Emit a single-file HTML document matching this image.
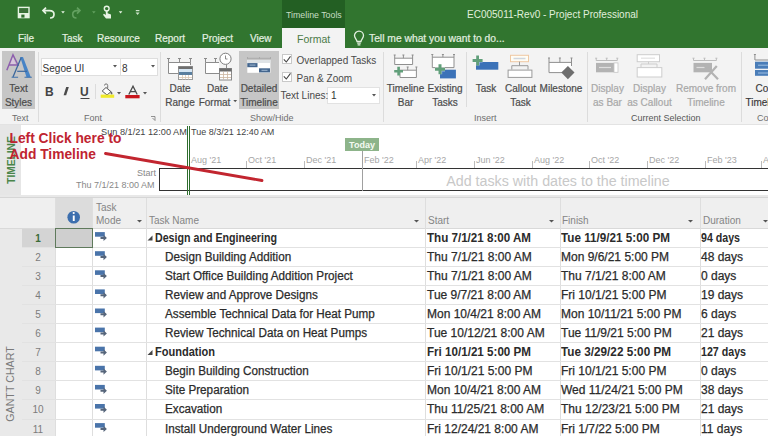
<!DOCTYPE html>
<html><head><meta charset="utf-8">
<style>
*{margin:0;padding:0;box-sizing:border-box}
html,body{width:768px;height:436px;overflow:hidden;background:#fff;font-family:"Liberation Sans",sans-serif}
.a{position:absolute;white-space:nowrap}
#title{position:absolute;left:0;top:0;width:768px;height:48px;background:#31752f}
#tools{position:absolute;left:282px;top:0;width:63px;height:28px;background:#235f23}
#fmt{position:absolute;left:282px;top:28px;width:63px;height:21px;background:#f3f3f3}
.tw{color:#e3f0e0;font-size:10px;line-height:14px;-webkit-text-stroke:0.2px #e3f0e0}
#ribbon{position:absolute;left:0;top:48px;width:768px;height:77px;background:#f3f3f3}
.rt{color:#4c4c4c;font-size:11px;text-align:center;-webkit-text-stroke:0.2px #4c4c4c}
.gl{color:#6e6e6e;font-size:10px}
.sep{position:absolute;width:1px;background:#dcdcdc}
.dis{color:#a8a8a8;-webkit-text-stroke:0.2px #a8a8a8 !important}
#tl{position:absolute;left:0;top:125px;width:768px;height:72px;background:#fff}
#grid{position:absolute;left:0;top:198px;width:768px;height:238px;background:#fff}
.row{position:absolute;left:22px;width:746px;height:19px;border-bottom:1px solid #e4e4e4}
.cell{position:absolute;top:0;height:19px;font-size:12px;color:#222;line-height:18px;white-space:nowrap;overflow:hidden}
.b{font-weight:bold}
</style></head><body>
<div id="title"></div>
<div id="tools"></div>
<div id="fmt"></div>

<!-- quick access -->
<svg class="a" style="left:0;top:0" width="150" height="28" viewBox="0 0 150 28">
  <rect x="18.4" y="7.4" width="10.6" height="10.2" fill="none" stroke="#e6f3e3" stroke-width="1.4"/>
  <rect x="18.4" y="13" width="10.6" height="4.6" fill="#e6f3e3"/>
  <rect x="21.3" y="14.6" width="3.2" height="3" fill="#2e6a2c"/>
  <rect x="20" y="9" width="7.4" height="3.6" fill="#3c6f3a"/>
  <path d="M46 7.6 L43 10.6 L46 13.6 M43.3 10.6 H49.5 C52.5 10.6 54 12.3 54 14.3 C54 16.4 52.5 18 50 18" fill="none" stroke="#e6f3e3" stroke-width="1.7"/>
  <path d="M61.2 11.3 h3.6 l-1.8 2.2z" fill="#e6f3e3"/>
  <path d="M77 7.6 L80 10.6 L77 13.6 M79.7 10.6 H77 C74 10.6 72.7 12.3 72.7 14.3 C72.7 16.4 74 18 76.5 18" fill="none" stroke="#62a05f" stroke-width="1.6"/>
  <path d="M92 11.3 h3.6 l-1.8 2.2z" fill="#62a05f"/>
  <circle cx="106.7" cy="8.6" r="2.4" fill="none" stroke="#e6f3e3" stroke-width="1.4"/>
  <path d="M105.8 10.5 V15 L104 13.8 L103 14.8 L106 18.5 H111 V14.5 L107.6 13.3 V10.5 Z" fill="#e6f3e3"/>
  <path d="M118.8 11.3 h3.6 l-1.8 2.2z" fill="#e6f3e3"/>
  <rect x="135.8" y="10" width="3.6" height="1.2" fill="#cfe5cc"/>
  <path d="M135.6 12.6 h4 l-2 2.3z" fill="#cfe5cc"/>
</svg>
<div class="a" style="left:286px;top:8px;font-size:8.8px;line-height:14px;color:#c6dec4">Timeline Tools</div>
<div class="a" style="left:467px;top:7.5px;font-size:10px;line-height:14px;color:#e0f0dc">EC005011-Rev0 - Project Professional</div>

<!-- tabs -->
<div class="a tw" style="left:18px;top:31.5px">File</div>
<div class="a tw" style="left:62px;top:31.5px">Task</div>
<div class="a tw" style="left:97px;top:31.5px">Resource</div>
<div class="a tw" style="left:155px;top:31.5px">Report</div>
<div class="a tw" style="left:202px;top:31.5px">Project</div>
<div class="a tw" style="left:250px;top:31.5px">View</div>
<div class="a" style="left:297px;top:31.5px;font-size:10.5px;line-height:14px;color:#4b7a48">Format</div>
<svg class="a" style="left:352px;top:30px" width="14" height="17" viewBox="0 0 14 17">
  <path d="M5 11.5 C4.6 9.3 2.5 8 2.5 5.6 A4.5 4.5 0 0 1 11.5 5.6 C11.5 8 9.4 9.3 9 11.5 Z" fill="none" stroke="#e3f0e0" stroke-width="1.3"/>
  <path d="M5.2 13.2 h3.6 M5.6 14.8 h2.8" stroke="#e3f0e0" stroke-width="1.2"/>
</svg>
<div class="a tw" style="left:369px;top:31.5px;font-size:10.3px">Tell me what you want to do...</div>


<div id="ribbon"></div>
<div class="a" style="left:0;top:123.8px;width:768px;height:1px;background:#e3e3e3"></div>
<!-- ribbon highlights -->
<div class="a" style="left:2px;top:51px;width:33px;height:58px;background:#c6c6c6"></div>
<div class="a" style="left:239px;top:51px;width:40px;height:58px;background:#c6c6c6"></div>
<!-- separators -->
<div class="sep" style="left:38px;top:52px;height:70px"></div>
<div class="sep" style="left:160px;top:52px;height:70px"></div>
<div class="sep" style="left:383px;top:52px;height:70px"></div>
<div class="sep" style="left:466px;top:52px;height:55px"></div>
<div class="sep" style="left:587px;top:52px;height:70px"></div>
<div class="sep" style="left:741px;top:52px;height:70px"></div>
<div class="sep" style="left:95px;top:84px;height:15px"></div>
<!-- combos -->
<div class="a" style="left:41px;top:58px;width:80px;height:18px;background:#fff;border:1px solid #dedede"></div>
<div class="a" style="left:120px;top:58px;width:37.5px;height:18px;background:#fff;border:1px solid #dedede"></div>
<div class="a" style="left:42.6px;top:61.5px;font-size:10px;color:#333;line-height:14px">Segoe UI</div>
<div class="a" style="left:122px;top:61.5px;font-size:10px;color:#333;line-height:14px">8</div>
<div class="a" style="left:327px;top:87px;width:53px;height:17px;background:#fff;border:1px solid #e2e2e2"></div>
<div class="a" style="left:331px;top:89.3px;font-size:10px;color:#333;line-height:14px">1</div>
<!-- labels -->
<div class="a rt" style="left:-2px;top:81.5px;width:41px;line-height:14px;font-size:10px">Text<br>Styles</div>
<div class="a rt" style="left:160px;top:81.5px;width:40px;line-height:14px;font-size:10px">Date<br>Range</div>
<div class="a rt" style="left:197px;top:81.5px;width:41px;line-height:14px;font-size:10px">Date<br><span style="margin-left:-6px">Format</span></div>
<div class="a rt" style="left:239px;top:81.5px;width:40px;line-height:14px;font-size:10px">Detailed<br>Timeline</div>
<div class="a rt" style="left:385px;top:81.5px;width:41px;line-height:14px;font-size:10px">Timeline<br>Bar</div>
<div class="a rt" style="left:425px;top:81.5px;width:40px;line-height:14px;font-size:10px">Existing<br>Tasks</div>
<div class="a rt" style="left:466px;top:81.5px;width:40px;line-height:14px;font-size:10px">Task</div>
<div class="a rt" style="left:500px;top:81.5px;width:41px;line-height:14px;font-size:10px">Callout<br>Task</div>
<div class="a rt" style="left:537px;top:81.5px;width:48px;line-height:14px;font-size:10px">Milestone</div>
<div class="a rt dis" style="left:587px;top:81.5px;width:41px;line-height:14px;font-size:10px">Display<br>as Bar</div>
<div class="a rt dis" style="left:625px;top:81.5px;width:49px;line-height:14px;font-size:10px">Display<br>as Callout</div>
<div class="a rt dis" style="left:672px;top:81.5px;width:68px;line-height:14px;font-size:10px">Remove from<br>Timeline</div>
<div class="a rt" style="left:745.5px;top:81.5px;width:60px;line-height:14px;font-size:10px;text-align:left;color:#383838;-webkit-text-stroke:0.15px #383838"><span style="margin-left:10px">Co</span><br>Timeline</div>
<div class="a" style="left:296.5px;top:53.7px;font-size:10px;color:#4a4a4a;line-height:14px">Overlapped Tasks</div>
<div class="a" style="left:296.5px;top:71.5px;font-size:10px;color:#4a4a4a;line-height:14px">Pan &amp; Zoom</div>
<div class="a" style="left:280.5px;top:89px;font-size:10px;color:#4a4a4a;line-height:14px">Text Lines:</div>
<div class="a gl" style="left:12px;top:111.8px;line-height:12px;font-size:9px">Text</div>
<div class="a gl" style="left:84px;top:111.8px;line-height:12px;font-size:9px">Font</div>
<div class="a gl" style="left:250px;top:111.8px;line-height:12px;font-size:9px">Show/Hide</div>
<div class="a gl" style="left:474px;top:111.8px;line-height:12px;font-size:9px">Insert</div>
<div class="a gl" style="left:631px;top:111.8px;line-height:12px;font-size:9px;color:#555">Current Selection</div>
<div class="a gl" style="left:757px;top:111.8px;line-height:12px;font-size:9px">Co</div>
<!-- checkboxes -->
<div class="a" style="left:282px;top:54px;width:10px;height:10px;background:#fff;border:1px solid #c8c8c8"></div>
<div class="a" style="left:282px;top:71.5px;width:10px;height:10px;background:#fff;border:1px solid #c8c8c8"></div>
<svg class="a" style="left:0;top:0" width="768" height="200" viewBox="0 0 768 200">
 <g fill="none" stroke="#444" stroke-width="1.1">
  <path d="M283.8 59.3 l2.5 2.7 l4.2 -5.6"/>
  <path d="M283.8 76.3 l2.5 2.7 l4.2 -5.6"/>
 </g>
 <!-- text styles AA -->
 <path d="M6.8 70.3 L13 54.8 L18.5 66 M9.3 65 H17" fill="none" stroke="#8e5fae" stroke-width="1.5"/>
 <path d="M10.5 64 L13 57.5 L15.5 64z" fill="#e2c6ea" opacity="0.7"/>
 <path d="M20.2 57 L23 57 L30.8 77.2 L26.5 77.2 Z" fill="#4884c6"/>
 <path d="M21.2 57.5 L13 77" fill="none" stroke="#3c679c" stroke-width="1.3"/>
 <path d="M17.2 71.3 H27" fill="none" stroke="#3c679c" stroke-width="1.2"/>
 <path d="M11.6 77.2 h6.5 M24.5 77.2 h7.3" fill="none" stroke="#3f72ac" stroke-width="1.1"/>
 <!-- combo arrows -->
 <path d="M113 65 h4 l-2 2.5z M151 65 h4 l-2 2.5z M372 94 h4 l-2 2.5z" fill="#555"/>
 <!-- B I U -->
 <text x="45" y="96" font-family="Liberation Sans" font-size="12" font-weight="bold" fill="#444">B</text>
 <path d="M66.2 87 h2.6 l-2.6 8.2 h-2.6z" fill="#4a4a4a"/>
 <text x="80" y="96" font-family="Liberation Sans" font-size="12" font-weight="bold" fill="#444">U</text>
 <path d="M80.5 98.5 h9" stroke="#444" stroke-width="1"/>
 <!-- fill color -->
 <path d="M104.5 85.5 a1.6 1.6 0 0 1 3.2 0 v3" fill="none" stroke="#666" stroke-width="0.9"/>
 <path d="M106 87.5 l5 4.2 l-4 3.3 l-4.8 -4z" fill="#fff" stroke="#555" stroke-width="1"/>
 <path d="M111.2 91.2 q1.8 1.6 1.2 3 q-1 0.8 -1.8 -0.4z" fill="#666"/>
 <rect x="100.7" y="94.6" width="13.5" height="3.2" fill="#f0ea2c"/>
 <path d="M117 92 h4 l-2 2.5z" fill="#555"/>
 <path d="M128.8 94.5 L133 86.3 L137.2 94.5 M130.3 91.6 H135.7" fill="none" stroke="#4a4a4a" stroke-width="1.3"/>
 <rect x="125.3" y="95" width="14.3" height="3.3" fill="#c8161d"/>
 <path d="M143 92 h4 l-2 2.5z" fill="#555"/>
 <path d="M151 116.5 h4 v4 M152.5 118 l2.5 2.5" fill="none" stroke="#777" stroke-width="0.8"/>
 <path d="M233.3 100 h3.8 l-1.9 2.3z" fill="#555"/>
</svg>



<svg class="a" style="left:0;top:0" width="768" height="200" viewBox="0 0 768 200">
 <!-- Date Range -->
 <path d="M168.5 73.5 V62.5 H190.5 V65 M168.5 73.5 H178 M168.5 58 v4.5 M179.5 58 v4.5 M190.5 58 v4.5 M167 58.5 h3 M178 58.5 h3 M189 58.5 h3" fill="none" stroke="#8c8c8c" stroke-width="1"/>
 <rect x="169" y="63" width="21" height="10" fill="#fff"/>
 <rect x="178.5" y="66.5" width="14" height="13" fill="#fff" stroke="#9a9a9a"/>
 <rect x="178.5" y="66.5" width="14" height="2.5" fill="#6e6e6e"/>
 <rect x="179" y="69" width="13" height="3" fill="#d6e6f3"/>
 <rect x="179" y="72" width="13" height="3" fill="#5a7f9f"/>
 <path d="M179 77.5 h13 M182.5 75 v4.5 M185.5 75 v4.5 M188.5 75 v4.5" stroke="#dcc9b5" stroke-width="0.8"/>
 <!-- Date Format -->
 <path d="M205.5 73.5 V62.5 H219 M205.5 73.5 H219 M205.5 58 v4.5 M215.5 58 v4.5 M204 58.5 h3 M214 58.5 h3" fill="none" stroke="#8c8c8c" stroke-width="1"/>
 <rect x="206" y="63" width="13" height="10" fill="#fff"/>
 <circle cx="225.5" cy="58.8" r="5.6" fill="#fff" stroke="#7d7d7d" stroke-width="1"/>
 <path d="M225.5 55.5 v3.5 h2" fill="none" stroke="#7d7d7d" stroke-width="0.9"/>
 <path d="M226.5 64.5 v4" stroke="#8c8c8c"/>
 <rect x="219.5" y="68.5" width="12" height="11.5" fill="#fff" stroke="#8a8a8a"/>
 <rect x="219.5" y="68.5" width="12" height="3" fill="#6b6b6b"/>
 <path d="M220 74.5 h11 M220 77.5 h11 M223.5 71.5 v8 M227.5 71.5 v8" stroke="#cdb6a0" stroke-width="0.8"/>
 <!-- Detailed Timeline -->
 <path d="M247 58.3 h24 M247.5 57 v2 M259.5 57 v2 M270.5 57 v2" stroke="#aaa" stroke-width="1"/>
 <rect x="247.3" y="60" width="23.1" height="12.8" fill="#fff"/>
 <rect x="247.3" y="60" width="23.1" height="3" fill="#dfe3e6"/>
 <rect x="247.3" y="63.1" width="10.2" height="4.1" fill="#44668e"/>
 <rect x="259" y="68.3" width="11" height="4.1" fill="#44668e"/>
 <path d="M249.5 65.1 h6 M261.5 70.3 h6" stroke="#b9cde2" stroke-width="0.8"/>
 <!-- Timeline Bar -->
 <rect x="394.7" y="58.2" width="17.9" height="6.3" fill="#fff"/>
 <path d="M394.7 55 V64.5 H412.6 V55 M394.7 58.2 H412.6 M403.4 55 v3.2 M393.7 55 h2 M402.4 55 h2 M411.6 55 h2" fill="none" stroke="#8f8f8f" stroke-width="1"/>
 <rect x="400" y="70.2" width="16.4" height="7.3" fill="#fff"/>
 <path d="M400 70.2 V77.5 H416.4 V67 M400 70.2 H416.4 M407.7 67 v3.2 M406.7 67 h2 M415.4 67 h2" fill="none" stroke="#8f8f8f" stroke-width="1"/>
 <path d="M398.6 66.8 v8.8 M394.2 71.2 h8.8" stroke="#619f7a" stroke-width="2.6"/>
 <!-- Existing Tasks -->
 <rect x="432.3" y="57.2" width="21.7" height="10.4" fill="#fff"/>
 <path d="M432.3 54.5 V67.6 H454 V54.5 M432.3 57.2 H454 M442.9 54.5 v2.7 M431.3 54.5 h2 M441.9 54.5 h2 M453 54.5 h2" fill="none" stroke="#8f8f8f" stroke-width="1"/>
 <rect x="440" y="69.7" width="15.9" height="8.7" fill="#3b72b8"/>
 <path d="M440 64.3 v10 M435 69.3 h10" stroke="#fff" stroke-width="4.4" opacity="0.5"/>
 <path d="M440 64.3 v10 M435 69.3 h10" stroke="#619f7a" stroke-width="3"/>
 <!-- Task -->
 <rect x="476" y="62" width="22.3" height="7.7" fill="#3b72b8"/>
 <path d="M477.6 55.5 v10 M472.6 60.5 h10" stroke="#fff" stroke-width="4.2" opacity="0.5"/>
 <path d="M477.6 55.5 v10 M472.6 60.5 h10" stroke="#619f7a" stroke-width="2.8"/>
 <!-- Callout Task -->
 <rect x="510.5" y="55.3" width="18" height="6.4" fill="#fffdf5" stroke="#efc9a3" stroke-width="1"/>
 <path d="M513.5 58.5 h12" stroke="#cfd6df" stroke-width="1.5"/>
 <path d="M519.5 61.7 v4 M511.8 69.5 V65.7 H528 V69.5" fill="none" stroke="#9a9a9a" stroke-width="1"/>
 <rect x="508.1" y="70.1" width="23.8" height="7.3" fill="#fff" stroke="#9a9a9a" stroke-width="1"/>
 <!-- Milestone -->
 <rect x="549" y="62.4" width="22.5" height="10.2" fill="#fff"/>
 <path d="M549 58 V72.6 H562 M571.5 58 V66 M549 62.4 H571.5 M559.9 58 v4.4 M548 58 h2 M558.9 58 h2 M570.5 58 h2" fill="none" stroke="#8f8f8f" stroke-width="1"/>
 <path d="M567.9 66 l6.6 6.6 l-6.6 6.6 l-6.6 -6.6z" fill="#6e6e6e"/>
 <!-- Display as Bar (disabled) -->
 <path d="M596.2 58.2 V60.5 H617.3 V58.2 M606.7 58.2 v2.3 M595.2 58.2 h2 M605.7 58.2 h2 M616.3 58.2 h2" fill="none" stroke="#bdbdbd" stroke-width="1"/>
 <rect x="596" y="62.9" width="18" height="9.4" fill="#b3b3b3"/>
 <rect x="614" y="62.9" width="4" height="9.4" fill="#fff" stroke="#c5c5c5" stroke-width="0.8"/>
 <path d="M599 67.5 h12" stroke="#dedede" stroke-width="1.2"/>
 <!-- Display as Callout -->
 <rect x="637.2" y="54.7" width="22.3" height="7" fill="#fff" stroke="#cdcdcd"/>
 <path d="M641 58.2 h14" stroke="#e3e3e3" stroke-width="1.3"/>
 <path d="M648.5 61.7 v2.3 M641 67.6 V64 H657 V67.6" fill="none" stroke="#cdcdcd"/>
 <rect x="637.2" y="67.6" width="24.6" height="9.4" fill="#fff" stroke="#cdcdcd"/>
 <!-- Remove from Timeline -->
 <path d="M693.5 58.2 V60.5 H716.4 V58.2 M704.5 58.2 v2.3 M692.5 58.2 h2 M703.5 58.2 h2 M715.4 58.2 h2" fill="none" stroke="#bdbdbd" stroke-width="1"/>
 <rect x="693.5" y="62.9" width="18.5" height="9.4" fill="#b3b3b3"/>
 <path d="M696.5 67.5 h8" stroke="#dedede" stroke-width="1.2"/>
 <path d="M704.5 65.2 L718 79.3 M716.8 66 L705 79.3" stroke="#b3b3b3" stroke-width="2.2"/>
 <!-- Copy Timeline partial -->
 <path d="M754.9 54.5 v5.5 M753.9 54.5 h2 M755 60 H768" fill="none" stroke="#8f8f8f"/>
 <rect x="755" y="61.7" width="13" height="7" fill="#4a7db8"/>
 <rect x="755" y="70" width="13" height="5.8" fill="#4a7db8"/>
 <path d="M758 65.2 h10 M758 73 h10" stroke="#9dbfe2" stroke-width="1"/>
</svg>


<div class="a" style="left:0;top:125px;width:768px;height:70px;background:#fff"></div>
<div class="a" style="left:0;top:125px;width:21px;height:70px;background:#e6e6e6"></div>
<div class="a" style="left:0;top:195px;width:768px;height:3px;background:#e8e8e8"></div>
<div class="a" style="left:-14.8px;top:152.5px;width:54px;height:14px;transform:rotate(-90deg);font-size:10.2px;line-height:14px;color:#4a854a;text-align:center;font-weight:bold">TIMELINE</div>
<div class="a" style="left:101px;top:125px;font-size:9.2px;line-height:14px;color:#444">Sun 8/1/21 12:00 AM</div>
<div class="a" style="left:191px;top:125px;font-size:9px;line-height:14px;color:#444">Tue 8/3/21 12:40 AM</div>
<div class="a" style="left:159px;top:168px;width:609px;height:23px;border-top:1.5px solid #333;border-bottom:1.5px solid #333;border-left:1.5px solid #333"></div>
<div class="a" style="left:137px;top:166px;font-size:9px;line-height:14px;color:#888">Start</div>
<div class="a" style="left:76px;top:178px;font-size:9px;line-height:14px;color:#888">Thu 7/1/21 8:00 AM</div>
<div class="a" style="left:446.3px;top:172px;font-size:14.25px;line-height:18px;color:#c8c8c8">Add tasks with dates to the timeline</div>
<div class="a" style="left:345px;top:138px;width:34px;height:12.5px;background:#8db48a;color:#f4faf2;font-size:9px;line-height:15px;font-weight:bold;text-align:center;overflow:hidden">Today</div>
<div class="a" style="left:362px;top:151px;width:1px;height:40px;background:#a0a0a0"></div>
<svg class="a" style="left:0;top:0" width="768" height="200" viewBox="0 0 768 200">
 <g stroke="#bbb" stroke-width="1">
  <path d="M246.5 161 v7 M304.5 161 v7 M416.5 161 v7 M474.5 161 v7 M532.5 161 v7 M589.5 161 v7 M647.5 161 v7 M705.5 161 v7 M761.5 161 v7"/>
 </g>
 <path d="M187.5 126 v69 M189.5 126 v69" stroke="#2f6e2e" stroke-width="1"/>
</svg>
<div class="a" style="left:191px;top:153px;font-size:9px;line-height:14px;color:#a6a6a6">Aug '21</div>
<div class="a" style="left:248px;top:153px;font-size:9px;line-height:14px;color:#a6a6a6">Oct '21</div>
<div class="a" style="left:306px;top:153px;font-size:9px;line-height:14px;color:#a6a6a6">Dec '21</div>
<div class="a" style="left:364px;top:153px;font-size:9px;line-height:14px;color:#a6a6a6">Feb '22</div>
<div class="a" style="left:418px;top:153px;font-size:9px;line-height:14px;color:#a6a6a6">Apr '22</div>
<div class="a" style="left:476px;top:153px;font-size:9px;line-height:14px;color:#a6a6a6">Jun '22</div>
<div class="a" style="left:534px;top:153px;font-size:9px;line-height:14px;color:#a6a6a6">Aug '22</div>
<div class="a" style="left:591px;top:153px;font-size:9px;line-height:14px;color:#a6a6a6">Oct '22</div>
<div class="a" style="left:649px;top:153px;font-size:9px;line-height:14px;color:#a6a6a6">Dec '22</div>
<div class="a" style="left:707px;top:153px;font-size:9px;line-height:14px;color:#a6a6a6">Feb '23</div>
<div class="a" style="left:763px;top:153px;font-size:9px;line-height:14px;color:#a6a6a6">Apr '23</div>
<div class="a" style="left:9.5px;top:130.9px;font-size:13.8px;line-height:16.3px;letter-spacing:0px;color:#bf2431;font-weight:bold">Left Click here to<br>Add Timeline</div>
<svg class="a" style="left:0;top:0" width="768" height="200" viewBox="0 0 768 200">
 <path d="M105.5 153.5 L262 180.5" stroke="#c2252f" stroke-width="2.8" stroke-linecap="round"/>
</svg>

<div class="a" style="left:0;top:198px;width:768px;height:238px;background:#fff"></div>
<div class="a" style="left:0;top:197px;width:768px;height:1px;background:#d6d6d6"></div>
<div class="a" style="left:0;top:198px;width:768px;height:30.5px;background:#efefef"></div>
<div class="a" style="left:0;top:228px;width:768px;height:1px;background:#d9d9d9"></div>
<div class="a" style="left:55px;top:198px;width:37px;height:30.5px;background:#dcdcdc"></div>
<div class="a" style="left:0;top:228.5px;width:55px;height:208px;background:#e9e9e9"></div>
<div class="a" style="left:22px;top:228.5px;width:33px;height:19px;background:#d4d4d4"></div>
<div class="a" style="left:55px;top:198px;width:1px;height:238px;background:#dedede"></div>
<div class="a" style="left:92px;top:198px;width:1px;height:238px;background:#dedede"></div>
<div class="a" style="left:145.5px;top:198px;width:1px;height:238px;background:#dedede"></div>
<div class="a" style="left:424.5px;top:198px;width:1px;height:238px;background:#dedede"></div>
<div class="a" style="left:559.5px;top:198px;width:1px;height:238px;background:#dedede"></div>
<div class="a" style="left:699.5px;top:198px;width:1px;height:238px;background:#dedede"></div>
<div class="a" style="left:22px;top:246.6px;width:746px;height:1px;background:#e2e2e2"></div>
<div class="a" style="left:22px;top:265.7px;width:746px;height:1px;background:#e2e2e2"></div>
<div class="a" style="left:22px;top:284.8px;width:746px;height:1px;background:#e2e2e2"></div>
<div class="a" style="left:22px;top:303.9px;width:746px;height:1px;background:#e2e2e2"></div>
<div class="a" style="left:22px;top:323.0px;width:746px;height:1px;background:#e2e2e2"></div>
<div class="a" style="left:22px;top:342.1px;width:746px;height:1px;background:#e2e2e2"></div>
<div class="a" style="left:22px;top:361.2px;width:746px;height:1px;background:#e2e2e2"></div>
<div class="a" style="left:22px;top:380.3px;width:746px;height:1px;background:#e2e2e2"></div>
<div class="a" style="left:22px;top:399.4px;width:746px;height:1px;background:#e2e2e2"></div>
<div class="a" style="left:22px;top:418.5px;width:746px;height:1px;background:#e2e2e2"></div>
<div class="a" style="left:22px;top:437.6px;width:746px;height:1px;background:#e2e2e2"></div>
<div class="a" style="left:55px;top:228px;width:38px;height:20px;background:#cfcfcf;border:1.5px solid #5f7a5c"></div>
<div class="a" style="left:96px;top:200.5px;font-size:10px;line-height:13.6px;color:#858585">Task<br>Mode</div>
<div class="a" style="left:149px;top:214px;font-size:10px;line-height:14px;color:#858585">Task Name</div>
<div class="a" style="left:428px;top:214px;font-size:10px;line-height:14px;color:#858585">Start</div>
<div class="a" style="left:562px;top:214px;font-size:10px;line-height:14px;color:#858585">Finish</div>
<div class="a" style="left:703px;top:214px;font-size:10px;line-height:14px;color:#858585">Duration</div>
<div class="a" style="left:22px;top:228.5px;width:33px;text-align:center;font-size:10px;line-height:19px;color:#3a6b38;font-weight:bold;padding-right:1px">1</div>
<div class="a" style="left:155px;top:228.5px;font-size:12px;line-height:19px;color:#2b2b2b;font-weight:bold;transform:scaleX(0.888);transform-origin:0 0;">Design and Engineering</div>
<div class="a" style="left:427px;top:228.5px;font-size:12px;line-height:19px;color:#2b2b2b;font-weight:bold;transform:scaleX(0.967);transform-origin:0 0;">Thu 7/1/21 8:00 AM</div>
<div class="a" style="left:561px;top:228.5px;font-size:12px;line-height:19px;color:#2b2b2b;font-weight:bold;transform:scaleX(0.975);transform-origin:0 0;">Tue 11/9/21 5:00 PM</div>
<div class="a" style="left:701px;top:228.5px;font-size:12px;line-height:19px;color:#2b2b2b;font-weight:bold;transform:scaleX(0.886);transform-origin:0 0;">94 days</div>
<div class="a" style="left:22px;top:247.6px;width:33px;text-align:center;font-size:10px;line-height:19px;color:#7c7c7c;padding-right:1px">2</div>
<div class="a" style="left:164.5px;top:247.6px;font-size:12px;line-height:19px;color:#2b2b2b;-webkit-text-stroke:0.25px #2b2b2b;transform:scaleX(0.975);transform-origin:0 0;">Design Building Addition</div>
<div class="a" style="left:427px;top:247.6px;font-size:12px;line-height:19px;color:#2b2b2b;-webkit-text-stroke:0.25px #2b2b2b;">Thu 7/1/21 8:00 AM</div>
<div class="a" style="left:561px;top:247.6px;font-size:12px;line-height:19px;color:#2b2b2b;-webkit-text-stroke:0.25px #2b2b2b;">Mon 9/6/21 5:00 PM</div>
<div class="a" style="left:701px;top:247.6px;font-size:12px;line-height:19px;color:#2b2b2b;-webkit-text-stroke:0.25px #2b2b2b;">48 days</div>
<div class="a" style="left:22px;top:266.7px;width:33px;text-align:center;font-size:10px;line-height:19px;color:#7c7c7c;padding-right:1px">3</div>
<div class="a" style="left:164.5px;top:266.7px;font-size:12px;line-height:19px;color:#2b2b2b;-webkit-text-stroke:0.25px #2b2b2b;transform:scaleX(0.975);transform-origin:0 0;">Start Office Building Addition Project</div>
<div class="a" style="left:427px;top:266.7px;font-size:12px;line-height:19px;color:#2b2b2b;-webkit-text-stroke:0.25px #2b2b2b;">Thu 7/1/21 8:00 AM</div>
<div class="a" style="left:561px;top:266.7px;font-size:12px;line-height:19px;color:#2b2b2b;-webkit-text-stroke:0.25px #2b2b2b;">Thu 7/1/21 8:00 AM</div>
<div class="a" style="left:701px;top:266.7px;font-size:12px;line-height:19px;color:#2b2b2b;-webkit-text-stroke:0.25px #2b2b2b;">0 days</div>
<div class="a" style="left:22px;top:285.8px;width:33px;text-align:center;font-size:10px;line-height:19px;color:#7c7c7c;padding-right:1px">4</div>
<div class="a" style="left:164.5px;top:285.8px;font-size:12px;line-height:19px;color:#2b2b2b;-webkit-text-stroke:0.25px #2b2b2b;transform:scaleX(0.975);transform-origin:0 0;">Review and Approve Designs</div>
<div class="a" style="left:427px;top:285.8px;font-size:12px;line-height:19px;color:#2b2b2b;-webkit-text-stroke:0.25px #2b2b2b;">Tue 9/7/21 8:00 AM</div>
<div class="a" style="left:561px;top:285.8px;font-size:12px;line-height:19px;color:#2b2b2b;-webkit-text-stroke:0.25px #2b2b2b;">Fri 10/1/21 5:00 PM</div>
<div class="a" style="left:701px;top:285.8px;font-size:12px;line-height:19px;color:#2b2b2b;-webkit-text-stroke:0.25px #2b2b2b;">19 days</div>
<div class="a" style="left:22px;top:304.9px;width:33px;text-align:center;font-size:10px;line-height:19px;color:#7c7c7c;padding-right:1px">5</div>
<div class="a" style="left:164.5px;top:304.9px;font-size:12px;line-height:19px;color:#2b2b2b;-webkit-text-stroke:0.25px #2b2b2b;transform:scaleX(0.975);transform-origin:0 0;">Assemble Technical Data for Heat Pump</div>
<div class="a" style="left:427px;top:304.9px;font-size:12px;line-height:19px;color:#2b2b2b;-webkit-text-stroke:0.25px #2b2b2b;">Mon 10/4/21 8:00 AM</div>
<div class="a" style="left:561px;top:304.9px;font-size:12px;line-height:19px;color:#2b2b2b;-webkit-text-stroke:0.25px #2b2b2b;">Mon 10/11/21 5:00 PM</div>
<div class="a" style="left:701px;top:304.9px;font-size:12px;line-height:19px;color:#2b2b2b;-webkit-text-stroke:0.25px #2b2b2b;">6 days</div>
<div class="a" style="left:22px;top:324.0px;width:33px;text-align:center;font-size:10px;line-height:19px;color:#7c7c7c;padding-right:1px">6</div>
<div class="a" style="left:164.5px;top:324.0px;font-size:12px;line-height:19px;color:#2b2b2b;-webkit-text-stroke:0.25px #2b2b2b;transform:scaleX(0.975);transform-origin:0 0;">Review Technical Data on Heat Pumps</div>
<div class="a" style="left:427px;top:324.0px;font-size:12px;line-height:19px;color:#2b2b2b;-webkit-text-stroke:0.25px #2b2b2b;">Tue 10/12/21 8:00 AM</div>
<div class="a" style="left:561px;top:324.0px;font-size:12px;line-height:19px;color:#2b2b2b;-webkit-text-stroke:0.25px #2b2b2b;">Tue 11/9/21 5:00 PM</div>
<div class="a" style="left:701px;top:324.0px;font-size:12px;line-height:19px;color:#2b2b2b;-webkit-text-stroke:0.25px #2b2b2b;">21 days</div>
<div class="a" style="left:22px;top:343.1px;width:33px;text-align:center;font-size:10px;line-height:19px;color:#7c7c7c;padding-right:1px">7</div>
<div class="a" style="left:155px;top:343.1px;font-size:12px;line-height:19px;color:#2b2b2b;font-weight:bold;transform:scaleX(0.919);transform-origin:0 0;">Foundation</div>
<div class="a" style="left:427px;top:343.1px;font-size:12px;line-height:19px;color:#2b2b2b;font-weight:bold;transform:scaleX(0.968);transform-origin:0 0;">Fri 10/1/21 5:00 PM</div>
<div class="a" style="left:561px;top:343.1px;font-size:12px;line-height:19px;color:#2b2b2b;font-weight:bold;transform:scaleX(0.978);transform-origin:0 0;">Tue 3/29/22 5:00 PM</div>
<div class="a" style="left:701px;top:343.1px;font-size:12px;line-height:19px;color:#2b2b2b;font-weight:bold;transform:scaleX(0.888);transform-origin:0 0;">127 days</div>
<div class="a" style="left:22px;top:362.2px;width:33px;text-align:center;font-size:10px;line-height:19px;color:#7c7c7c;padding-right:1px">8</div>
<div class="a" style="left:164.5px;top:362.2px;font-size:12px;line-height:19px;color:#2b2b2b;-webkit-text-stroke:0.25px #2b2b2b;transform:scaleX(0.975);transform-origin:0 0;">Begin Building Construction</div>
<div class="a" style="left:427px;top:362.2px;font-size:12px;line-height:19px;color:#2b2b2b;-webkit-text-stroke:0.25px #2b2b2b;">Fri 10/1/21 5:00 PM</div>
<div class="a" style="left:561px;top:362.2px;font-size:12px;line-height:19px;color:#2b2b2b;-webkit-text-stroke:0.25px #2b2b2b;">Fri 10/1/21 5:00 PM</div>
<div class="a" style="left:701px;top:362.2px;font-size:12px;line-height:19px;color:#2b2b2b;-webkit-text-stroke:0.25px #2b2b2b;">0 days</div>
<div class="a" style="left:22px;top:381.3px;width:33px;text-align:center;font-size:10px;line-height:19px;color:#7c7c7c;padding-right:1px">9</div>
<div class="a" style="left:164.5px;top:381.3px;font-size:12px;line-height:19px;color:#2b2b2b;-webkit-text-stroke:0.25px #2b2b2b;transform:scaleX(0.975);transform-origin:0 0;">Site Preparation</div>
<div class="a" style="left:427px;top:381.3px;font-size:12px;line-height:19px;color:#2b2b2b;-webkit-text-stroke:0.25px #2b2b2b;">Mon 10/4/21 8:00 AM</div>
<div class="a" style="left:561px;top:381.3px;font-size:12px;line-height:19px;color:#2b2b2b;-webkit-text-stroke:0.25px #2b2b2b;">Wed 11/24/21 5:00 PM</div>
<div class="a" style="left:701px;top:381.3px;font-size:12px;line-height:19px;color:#2b2b2b;-webkit-text-stroke:0.25px #2b2b2b;">38 days</div>
<div class="a" style="left:22px;top:400.4px;width:33px;text-align:center;font-size:10px;line-height:19px;color:#7c7c7c;padding-right:1px">10</div>
<div class="a" style="left:164.5px;top:400.4px;font-size:12px;line-height:19px;color:#2b2b2b;-webkit-text-stroke:0.25px #2b2b2b;transform:scaleX(0.975);transform-origin:0 0;">Excavation</div>
<div class="a" style="left:427px;top:400.4px;font-size:12px;line-height:19px;color:#2b2b2b;-webkit-text-stroke:0.25px #2b2b2b;">Thu 11/25/21 8:00 AM</div>
<div class="a" style="left:561px;top:400.4px;font-size:12px;line-height:19px;color:#2b2b2b;-webkit-text-stroke:0.25px #2b2b2b;">Thu 12/23/21 5:00 PM</div>
<div class="a" style="left:701px;top:400.4px;font-size:12px;line-height:19px;color:#2b2b2b;-webkit-text-stroke:0.25px #2b2b2b;">21 days</div>
<div class="a" style="left:22px;top:419.5px;width:33px;text-align:center;font-size:10px;line-height:19px;color:#7c7c7c;padding-right:1px">11</div>
<div class="a" style="left:164.5px;top:419.5px;font-size:12px;line-height:19px;color:#2b2b2b;-webkit-text-stroke:0.25px #2b2b2b;transform:scaleX(0.975);transform-origin:0 0;">Install Underground Water Lines</div>
<div class="a" style="left:427px;top:419.5px;font-size:12px;line-height:19px;color:#2b2b2b;-webkit-text-stroke:0.25px #2b2b2b;">Fri 12/24/21 8:00 AM</div>
<div class="a" style="left:561px;top:419.5px;font-size:12px;line-height:19px;color:#2b2b2b;-webkit-text-stroke:0.25px #2b2b2b;">Fri 1/7/22 5:00 PM</div>
<div class="a" style="left:701px;top:419.5px;font-size:12px;line-height:19px;color:#2b2b2b;-webkit-text-stroke:0.25px #2b2b2b;">11 days</div>
<div class="a" style="left:0;top:228.5px;width:21px;height:208px;background:#e9e9e9"></div>
<div class="a" style="left:-30px;top:376.5px;width:80px;height:14px;transform:rotate(-90deg);font-size:10.7px;line-height:14px;color:#7a7a7a;text-align:center">GANTT CHART</div>
<svg class="a" style="left:0;top:0" width="768" height="436" viewBox="0 0 768 436">
<path d="M137 220 h5 l-2.5 2.5z" fill="#555"/>
<path d="M414 220 h5 l-2.5 2.5z" fill="#555"/>
<path d="M549 220 h5 l-2.5 2.5z" fill="#555"/>
<path d="M688 220 h5 l-2.5 2.5z" fill="#555"/>
<path d="M763 220 h5 l-2.5 2.5z" fill="#555"/>
<circle cx="73.7" cy="217.2" r="6.3" fill="#3d6fae"/><rect x="72.8" y="215.5" width="1.9" height="5.5" fill="#fff"/><circle cx="73.7" cy="213" r="1.1" fill="#fff"/>
<rect x="95" y="232.1" width="9.8" height="4.6" fill="#4a74aa"/>
<path d="M100.5 236.9 h3 v-2.2 l3.4 3.2 l-3.4 3.2 v-2.2 h-3z" fill="#56657a"/>
<path d="M147.5 240.5 h5 v-5z" fill="#444"/>
<rect x="95" y="251.2" width="9.8" height="4.6" fill="#4a74aa"/>
<path d="M100.5 256.0 h3 v-2.2 l3.4 3.2 l-3.4 3.2 v-2.2 h-3z" fill="#56657a"/>
<rect x="95" y="270.3" width="9.8" height="4.6" fill="#4a74aa"/>
<path d="M100.5 275.1 h3 v-2.2 l3.4 3.2 l-3.4 3.2 v-2.2 h-3z" fill="#56657a"/>
<rect x="95" y="289.4" width="9.8" height="4.6" fill="#4a74aa"/>
<path d="M100.5 294.2 h3 v-2.2 l3.4 3.2 l-3.4 3.2 v-2.2 h-3z" fill="#56657a"/>
<rect x="95" y="308.5" width="9.8" height="4.6" fill="#4a74aa"/>
<path d="M100.5 313.3 h3 v-2.2 l3.4 3.2 l-3.4 3.2 v-2.2 h-3z" fill="#56657a"/>
<rect x="95" y="327.6" width="9.8" height="4.6" fill="#4a74aa"/>
<path d="M100.5 332.4 h3 v-2.2 l3.4 3.2 l-3.4 3.2 v-2.2 h-3z" fill="#56657a"/>
<rect x="95" y="346.7" width="9.8" height="4.6" fill="#4a74aa"/>
<path d="M100.5 351.5 h3 v-2.2 l3.4 3.2 l-3.4 3.2 v-2.2 h-3z" fill="#56657a"/>
<path d="M147.5 355.1 h5 v-5z" fill="#444"/>
<rect x="95" y="365.8" width="9.8" height="4.6" fill="#4a74aa"/>
<path d="M100.5 370.6 h3 v-2.2 l3.4 3.2 l-3.4 3.2 v-2.2 h-3z" fill="#56657a"/>
<rect x="95" y="384.9" width="9.8" height="4.6" fill="#4a74aa"/>
<path d="M100.5 389.7 h3 v-2.2 l3.4 3.2 l-3.4 3.2 v-2.2 h-3z" fill="#56657a"/>
<rect x="95" y="404.0" width="9.8" height="4.6" fill="#4a74aa"/>
<path d="M100.5 408.8 h3 v-2.2 l3.4 3.2 l-3.4 3.2 v-2.2 h-3z" fill="#56657a"/>
<rect x="95" y="423.1" width="9.8" height="4.6" fill="#4a74aa"/>
<path d="M100.5 427.9 h3 v-2.2 l3.4 3.2 l-3.4 3.2 v-2.2 h-3z" fill="#56657a"/>
</svg>
</body></html>
